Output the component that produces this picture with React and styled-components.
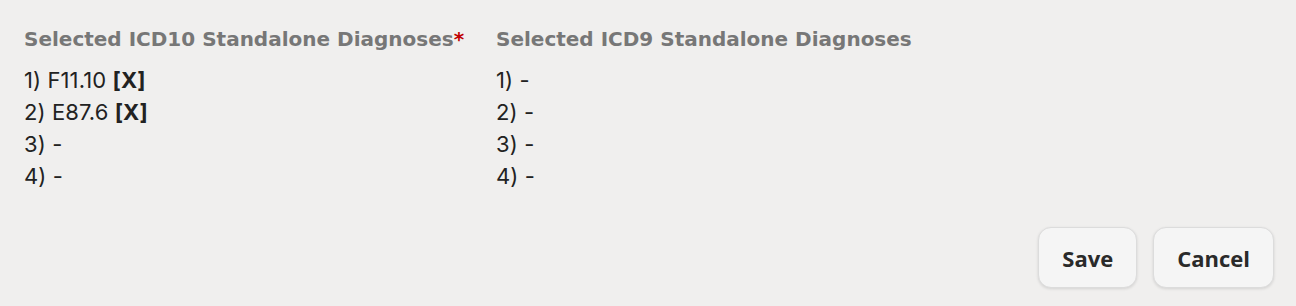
import React from "react";
import styled, { createGlobalStyle } from "styled-components";

const GlobalStyle = createGlobalStyle`
  html, body {
    margin: 0;
    padding: 0;
    background: #f0efee;
  }
  body {
    font-family: Inter, "Noto Sans", sans-serif;
    color: #222222;
  }
`;

const Page = styled.div`
  height: 306px;
  box-sizing: border-box;
  padding: 24px 22px 0 24px;
  display: flex;
  flex-direction: column;
`;

const Columns = styled.div`
  display: flex;
  gap: 30px;
`;

const Column = styled.div`
  width: ${(p) => p.width}px;
`;

const Heading = styled.h3`
  margin: 0 0 10px;
  font-family: "DejaVu Sans", Verdana, sans-serif;
  font-size: 20px;
  font-weight: bold;
  color: #777777;
  line-height: 30px;
  white-space: nowrap;

  span {
    color: #c00000;
  }
`;

const List = styled.ol`
  list-style: none;
  margin: 0;
  padding: 0;
`;

const Item = styled.li`
  font-size: 22px;
  letter-spacing: 0.1px;
  line-height: 32px;
  color: #222222;

  b {
    font-weight: 700;
  }
`;

const Actions = styled.div`
  margin-top: auto;
  margin-bottom: 18px;
  display: flex;
  justify-content: flex-end;
  gap: 16px;
`;

const Button = styled.button`
  height: 61px;
  padding: 0 23px;
  border: 1px solid #dcdcdc;
  border-radius: 13px;
  background: #f5f5f5;
  box-shadow: 0 1px 3px rgba(0, 0, 0, 0.12);
  font-family: "Open Sans", sans-serif;
  font-weight: 700;
  font-size: 22px;
  color: #2a2a2a;
  cursor: pointer;
`;

const icd10 = ["F11.10", "E87.6", null, null];
const icd9 = [null, null, null, null];

const DiagnosisList = ({ items }) => (
  <List>
    {items.map((code, i) => (
      <Item key={i}>
        {i + 1}) {code ? (
          <>
            {code} <b>[X]</b>
          </>
        ) : (
          "-"
        )}
      </Item>
    ))}
  </List>
);

export default function App() {
  return (
    <>
      <GlobalStyle />
      <Page>
        <Columns>
          <Column width={442}>
            <Heading>
              Selected ICD10 Standalone Diagnoses<span>*</span>
            </Heading>
            <DiagnosisList items={icd10} />
          </Column>
          <Column width={420}>
            <Heading>Selected ICD9 Standalone Diagnoses</Heading>
            <DiagnosisList items={icd9} />
          </Column>
        </Columns>
        <Actions>
          <Button>Save</Button>
          <Button>Cancel</Button>
        </Actions>
      </Page>
    </>
  );
}
